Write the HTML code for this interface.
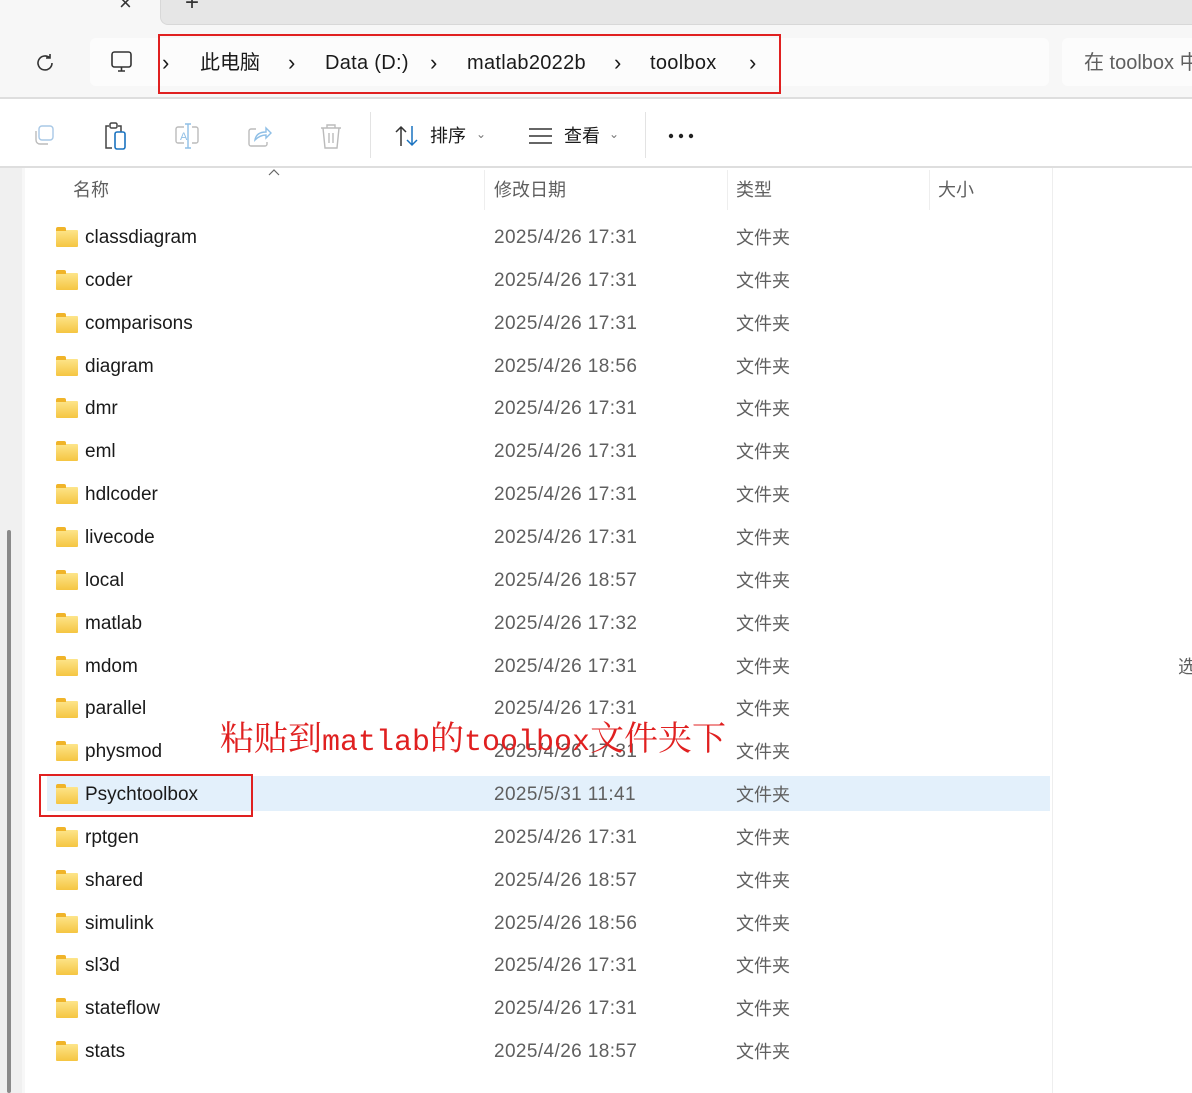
<!DOCTYPE html>
<html><head><meta charset="utf-8"><style>
*{margin:0;padding:0;box-sizing:border-box}
body{width:1192px;height:1093px;overflow:hidden;background:#fff;font-family:"Liberation Sans","Noto Sans CJK SC",sans-serif;position:relative;color:#1a1a1a}
.a{position:absolute}
.t{position:absolute;font-size:19px;white-space:nowrap;line-height:24px}
.fold{position:absolute;width:22px;height:17px;background:linear-gradient(#fde58a,#f5c542);border-radius:1px}
.fold:before{content:"";position:absolute;left:0;top:-3px;width:10px;height:4px;background:#f0b429;border-radius:2px 2px 0 0}
.g{color:#5f5f5f}
.dt{letter-spacing:0.4px}
</style></head><body>
<div class="a" style="left:0;top:0;width:1192px;height:25px;background:#f7f7f7"></div>
<div class="a" style="left:160px;top:-10px;width:1040px;height:35px;background:#e6e6e6;border-radius:0 0 0 8px;border-bottom:1px solid #d8d8d8;border-left:1px solid #d8d8d8"></div>
<div class="t" style="left:119px;top:-9px;font-size:22px;color:#333">×</div>
<div class="t" style="left:185px;top:-9px;font-size:24px;color:#333">+</div>
<div class="a" style="left:0;top:25px;width:1192px;height:74px;background:#f7f7f7;border-bottom:2px solid #dedede"></div>
<div class="a" style="left:90px;top:38px;width:959px;height:48px;background:#fcfcfc;border-radius:6px"></div>
<div class="a" style="left:1062px;top:38px;width:140px;height:48px;background:#fcfcfc;border-radius:6px"></div>
<svg class="a" style="left:33px;top:51px" width="24" height="24" viewBox="0 0 24 24"><path d="M19 12a7 7 0 1 1-2.5-5.4M17 3v4h-4" fill="none" stroke="#333" stroke-width="1.6"/></svg>
<svg class="a" style="left:108px;top:50px" width="28" height="26" viewBox="0 0 28 26"><rect x="4" y="2" width="19" height="15" rx="2.5" fill="none" stroke="#333" stroke-width="1.6"/><path d="M10 21h7M13.5 17v4" stroke="#333" stroke-width="1.6"/></svg>
<div class="t" style="left:162px;top:51px;font-size:22px">›</div>
<div class="t" style="left:200px;top:51px;font-size:20px">此电脑</div>
<div class="t" style="left:288px;top:51px;font-size:22px">›</div>
<div class="t" style="left:325px;top:51px;font-size:20px;letter-spacing:0.3px">Data (D:)</div>
<div class="t" style="left:430px;top:51px;font-size:22px">›</div>
<div class="t" style="left:467px;top:51px;font-size:20px;letter-spacing:0.3px">matlab2022b</div>
<div class="t" style="left:614px;top:51px;font-size:22px">›</div>
<div class="t" style="left:650px;top:51px;font-size:20px;letter-spacing:0.3px">toolbox</div>
<div class="t" style="left:749px;top:51px;font-size:22px">›</div>
<div class="t g" style="left:1084px;top:51px;font-size:20px">在 toolbox 中</div>
<div class="a" style="left:158px;top:34px;width:623px;height:60px;border:2px solid #e02020"></div>
<div class="a" style="left:0;top:166px;width:1192px;height:2px;background:#dedede"></div>
<svg class="a" style="left:30px;top:122px" width="30" height="28" viewBox="0 0 30 28"><rect x="9" y="4" width="14" height="14" rx="3" fill="none" stroke="#a8c8e6" stroke-width="1.4"/><path d="M6 9v9a4 4 0 0 0 4 4h8" fill="none" stroke="#bbb" stroke-width="1.4"/></svg>
<svg class="a" style="left:100px;top:120px" width="32" height="32" viewBox="0 0 32 32"><path d="M9 6H6v22h6M18 6h3v6" fill="none" stroke="#444" stroke-width="1.5"/><rect x="10" y="3" width="7" height="5" rx="1.5" fill="none" stroke="#444" stroke-width="1.5"/><rect x="15" y="12" width="10" height="17" rx="2" fill="none" stroke="#1a73c0" stroke-width="1.6"/></svg>
<svg class="a" style="left:172px;top:121px" width="32" height="30" viewBox="0 0 32 30"><path d="M12 6H6a2 2 0 0 0-2 2v12a2 2 0 0 0 2 2h6M20 6h4a2 2 0 0 1 2 2v12a2 2 0 0 1-2 2h-4" fill="none" stroke="#bbb" stroke-width="1.4"/><path d="M13 3h6M16 3v24M13 27h6" stroke="#8fbfe6" stroke-width="1.4"/><text x="8" y="19" font-size="11" fill="#8fbfe6" font-family="Liberation Sans">A</text></svg>
<svg class="a" style="left:244px;top:121px" width="32" height="30" viewBox="0 0 32 30"><path d="M12 8H7a2 2 0 0 0-2 2v13a2 2 0 0 0 2 2h14a2 2 0 0 0 2-2v-2" fill="none" stroke="#bbb" stroke-width="1.4"/><path d="M11 19c1-6 5-8 11-8V7l5 5-5 5v-3c-5 0-8 2-11 5z" fill="none" stroke="#8fbfe6" stroke-width="1.4"/></svg>
<svg class="a" style="left:316px;top:121px" width="30" height="30" viewBox="0 0 30 30"><path d="M5 7h20M11 7V4h8v3M7 7l2 20h12l2-20M13 12v10M17 12v10" fill="none" stroke="#bbb" stroke-width="1.4"/></svg>
<div class="a" style="left:370px;top:112px;width:1px;height:46px;background:#e3e3e3"></div>
<svg class="a" style="left:393px;top:124px" width="28" height="24" viewBox="0 0 28 24"><path d="M8 22V3M3 8l5-5 5 5" fill="none" stroke="#333" stroke-width="1.5"/><path d="M19 2v19M14 16l5 5 5-5" fill="none" stroke="#1a73c0" stroke-width="1.5"/></svg>
<div class="t" style="left:430px;top:124px;font-size:18px">排序</div>
<div class="t" style="left:476px;top:122px;font-size:12px;color:#777">⌄</div>
<svg class="a" style="left:528px;top:127px" width="26" height="18" viewBox="0 0 26 18"><path d="M1 2h23M1 9h23M1 16h23" stroke="#333" stroke-width="1.5"/></svg>
<div class="t" style="left:564px;top:124px;font-size:18px">查看</div>
<div class="t" style="left:609px;top:122px;font-size:12px;color:#777">⌄</div>
<div class="a" style="left:645px;top:112px;width:1px;height:46px;background:#e3e3e3"></div>
<svg class="a" style="left:668px;top:132px" width="28" height="8" viewBox="0 0 28 8"><circle cx="3" cy="4" r="2.2" fill="#222"/><circle cx="13" cy="4" r="2.2" fill="#222"/><circle cx="23" cy="4" r="2.2" fill="#222"/></svg>
<div class="a" style="left:0;top:168px;width:22px;height:925px;background:#f0f0f0"></div>
<div class="a" style="left:22px;top:168px;width:3px;height:925px;background:#f7f7f7"></div>
<div class="a" style="left:7px;top:530px;width:4px;height:563px;background:#8a8a8a;border-radius:2px"></div>
<svg class="a" style="left:268px;top:169px" width="12" height="8" viewBox="0 0 12 8"><path d="M1 6l5-5 5 5" fill="none" stroke="#666" stroke-width="1.2"/></svg>
<div class="t g" style="left:73px;top:178px;font-size:18px">名称</div>
<div class="a" style="left:484px;top:170px;width:1px;height:40px;background:#eee"></div>
<div class="t g" style="left:494px;top:178px;font-size:18px">修改日期</div>
<div class="a" style="left:727px;top:170px;width:1px;height:40px;background:#eee"></div>
<div class="t g" style="left:736px;top:178px;font-size:18px">类型</div>
<div class="a" style="left:929px;top:170px;width:1px;height:40px;background:#eee"></div>
<div class="t g" style="left:938px;top:178px;font-size:18px">大小</div>
<div class="a" style="left:1052px;top:168px;width:1px;height:925px;background:#eee"></div>
<div class="t g" style="left:1178px;top:655px;font-size:18px">选</div>
<div class="a" style="left:47px;top:776px;width:1003px;height:35px;background:#e3f0fb"></div>
<div id="rows"></div>
<div class="a" style="left:39px;top:774px;width:214px;height:43px;border:2px solid #e02020"></div>
<div class="t" style="left:220px;top:716px;font-size:34px;line-height:40px;color:#e02020;font-family:'Noto Serif CJK SC',serif">粘贴到<span style="font-family:'Liberation Mono',monospace;font-size:30px">matlab</span>的<span style="font-family:'Liberation Mono',monospace;font-size:30px">toolbox</span>文件夹下</div>
<script>
var d=[["classdiagram","2025/4/26 17:31"],["coder","2025/4/26 17:31"],["comparisons","2025/4/26 17:31"],["diagram","2025/4/26 18:56"],["dmr","2025/4/26 17:31"],["eml","2025/4/26 17:31"],["hdlcoder","2025/4/26 17:31"],["livecode","2025/4/26 17:31"],["local","2025/4/26 18:57"],["matlab","2025/4/26 17:32"],["mdom","2025/4/26 17:31"],["parallel","2025/4/26 17:31"],["physmod","2025/4/26 17:31"],["Psychtoolbox","2025/5/31 11:41"],["rptgen","2025/4/26 17:31"],["shared","2025/4/26 18:57"],["simulink","2025/4/26 18:56"],["sl3d","2025/4/26 17:31"],["stateflow","2025/4/26 17:31"],["stats","2025/4/26 18:57"]];
var h="";d.forEach(function(r,i){var y=226+i*42.85;h+='<div class="fold" style="left:56px;top:'+(y+4)+'px"></div><div class="t" style="left:85px;top:'+y+'px">'+r[0]+'</div><div class="t g dt" style="left:494px;top:'+y+'px">'+r[1]+'</div><div class="t g" style="left:736px;top:'+y+'px;font-size:18px">文件夹</div>';});
document.getElementById("rows").innerHTML=h;
</script>
</body></html>
